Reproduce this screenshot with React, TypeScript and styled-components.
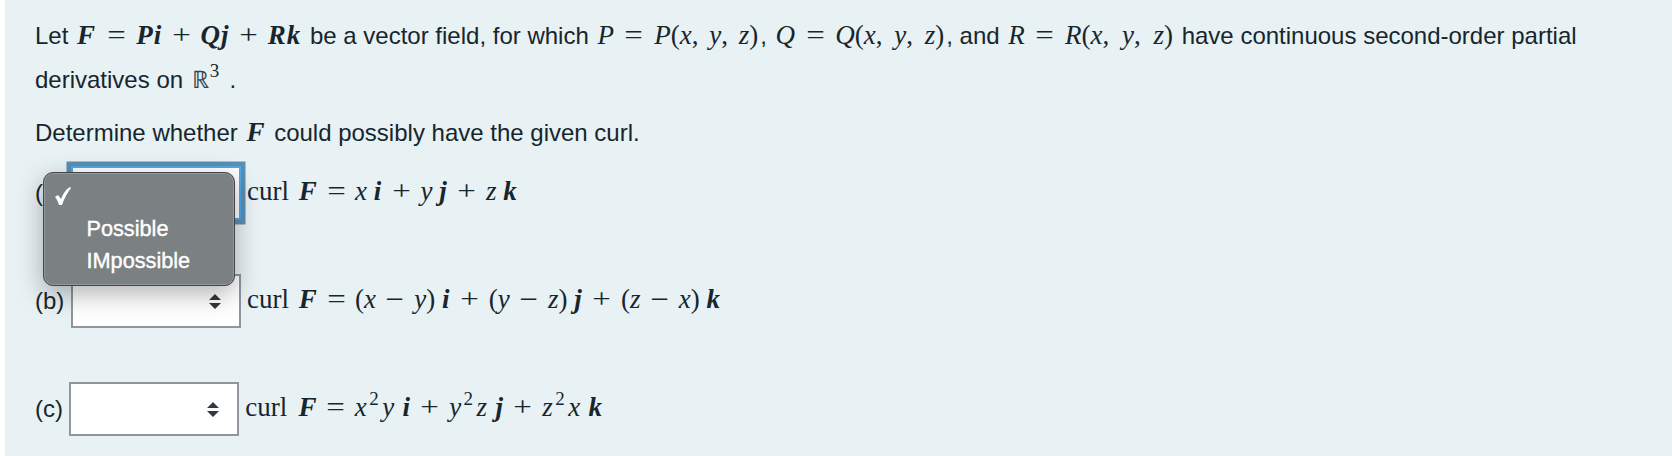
import React from "react";
import styled, { createGlobalStyle } from "styled-components";

const Global = createGlobalStyle`
  html, body { margin: 0; background: #fff; }
`;
const Panel = styled.main`
  margin-left: 5px;
  height: 456px;
  box-sizing: border-box;
  overflow: hidden;
  padding: 14px 0 0 30px;
  background: #e8f1f4;
  color: #17262c;
  font: 24px/44px "Liberation Sans", Arial, sans-serif;
`;
const Para = styled.p`
  margin: 0 0 9px;
`;
const Words = styled.span``;
const Math = styled.span`
  font: 27px/0 "Liberation Serif", "Times New Roman", serif;
  white-space: nowrap;
  padding: 0 2px;
`;
const N = styled.span``;
const V = styled.i`
  font-style: italic;
`;
const B = styled.b`
  font-style: italic;
  font-weight: 700;
  letter-spacing: 1px;
`;
const CurlF = styled(B)`
  margin-left: 3px;
`;
const Rel = styled.span<{ $m?: number }>`
  display: inline-block;
  line-height: 0;
  margin: 0 ${(p) => p.$m ?? 12.5}px;
  transform: scaleX(1.22);
`;
const Bin = styled.span`
  display: inline-block;
  line-height: 0;
  margin: 0 11.5px;
  transform: scaleX(1.22);
`;
const Thin = styled.span<{ $w: number }>`
  margin-right: ${(p) => p.$w}px;
`;
const Sup = styled.sup`
  font-size: 19px;
  line-height: 0;
  vertical-align: 11px;
  margin: 0 1.5px 0 1px;
`;
const Square = styled(Sup)`
  margin: 0 3.5px 0 2.5px;
`;
const Reals = styled.span`
  font: 24px/0 "DejaVu Sans", sans-serif;
  font-weight: 300;
  color: #33444a;
`;
const Rows = styled.div`
  margin-top: 11px;
  display: flex;
  flex-direction: column;
  gap: 54px;
`;
const Row = styled.div`
  position: relative;
  display: flex;
  align-items: center;
  height: 54px;
  line-height: 54px;
`;
const Label = styled.span<{ $gap?: number }>`
  margin-right: ${(p) => p.$gap ?? 6.67}px;
`;
const Select = styled.div<{ $focused?: boolean }>`
  box-sizing: border-box;
  width: 170px;
  height: 54px;
  margin-right: 6px;
  display: flex;
  align-items: center;
  justify-content: flex-end;
  padding-right: 18px;
  background: #fff;
  border: 2px solid ${(p) => (p.$focused ? "#4fa8ea" : "#8f969f")};
  box-shadow: ${(p) => (p.$focused ? "0 0 0 4.5px #5b8fb4" : "none")};
`;
const Arrows = styled.svg`
  width: 12px;
  height: 15px;
  fill: #30393e;
`;
const Equation = styled(Math)<{ $spread?: number }>`
  line-height: 48px;
  padding: 0 0 4px;
  word-spacing: ${(p) => p.$spread ?? 0}px;
`;
const Menu = styled.div`
  position: absolute;
  z-index: 2;
  left: 8px;
  top: 6px;
  box-sizing: border-box;
  width: 192px;
  height: 114px;
  padding-top: 8px;
  background: #7b8082;
  border: 1px solid #43474a;
  border-radius: 10px;
  box-shadow: inset 0 0 0 1px #93979a, 0 8px 26px rgba(0, 0, 0, 0.3);
  color: #fff;
  font: 21.7px/32px "Liberation Sans", Arial, sans-serif;
  -webkit-text-stroke: 0.4px #fff;
`;
const Item = styled.div`
  position: relative;
  height: 32px;
  padding-left: 42.5px;
`;
const Tick = styled.svg`
  position: absolute;
  left: 10px;
  top: 5px;
  width: 17px;
  height: 20px;
  fill: #fff;
`;

const Arrow = () => (
  <Arrows viewBox="0 0 12 15">
    <path d="M6 0 12 6H0zM0 9h12L6 15z" />
  </Arrows>
);

const Args = ({ thin }: { thin: number }) => (
  <>
    <N>(</N><V>x</V><N>,</N><Thin $w={thin} /> <V>y</V><N>,</N><Thin $w={thin} /> <V>z</V><N>)</N>
  </>
);

export default function App() {
  return (
    <>
      <Global />
      <Panel>
        <Para>
          <Words>Let</Words>{" "}
          <Math>
            <B>F</B><Rel>=</Rel><B>Pi</B><Bin>+</Bin><B>Qj</B><Bin>+</Bin><B>Rk</B>
          </Math>{" "}
          <Words>be a vector field, for which</Words>{" "}
          <Math>
            <V>P</V><Rel>=</Rel><V>P</V><Args thin={4} />
          </Math>
          <Words>,</Words>{" "}
          <Math>
            <V>Q</V><Rel>=</Rel><V>Q</V><Args thin={5} />
          </Math>
          <Words>, and</Words>{" "}
          <Math>
            <V>R</V><Rel>=</Rel><V>R</V><Args thin={6} />
          </Math>{" "}
          <Words>have continuous second-order partial</Words>{" "}
          <Words>derivatives on</Words>{" "}
          <Math>
            <Reals>ℝ</Reals><Sup>3</Sup>
          </Math>{" "}
          <Words>.</Words>
        </Para>
        <Para>
          <Words>Determine whether</Words> <Math><B>F</B></Math>{" "}
          <Words>could possibly have the given curl.</Words>
        </Para>
        <Rows>
          <Row>
            <Label>(a)</Label>
            <Select $focused><Arrow /></Select>
            <Equation>
              <N>curl</N> <CurlF>F</CurlF><Rel $m={11}>=</Rel><V>x</V> <B>i</B><Bin>+</Bin><V>y</V> <B>j</B><Bin>+</Bin><V>z</V> <B>k</B>
            </Equation>
            <Menu>
              <Item>
                <Tick viewBox="0 0 17 20">
                  <path d="M1 11 4 9 7 13C9 8 12 3 16 1L17 2C13 7 10 13 8 19H5C4 16 3 13 1 11Z" />
                </Tick>
              </Item>
              <Item>Possible</Item>
              <Item>IMpossible</Item>
            </Menu>
          </Row>
          <Row>
            <Label>(b)</Label>
            <Select><Arrow /></Select>
            <Equation>
              <N>curl</N> <CurlF>F</CurlF><Rel $m={11}>=</Rel><N>(</N><V>x</V><Bin>−</Bin><V>y</V><N>)</N> <B>i</B><Bin>+</Bin><N>(</N><V>y</V><Bin>−</Bin><V>z</V><N>)</N> <B>j</B><Bin>+</Bin><N>(</N><V>z</V><Bin>−</Bin><V>x</V><N>)</N> <B>k</B>
            </Equation>
          </Row>
          <Row>
            <Label $gap={6.2}>(c)</Label>
            <Select><Arrow /></Select>
            <Equation $spread={1.5}>
              <N>curl</N> <CurlF>F</CurlF><Rel $m={11}>=</Rel><V>x</V><Square>2</Square><V>y</V> <B>i</B><Bin>+</Bin><V>y</V><Square>2</Square><V>z</V> <B>j</B><Bin>+</Bin><V>z</V><Square>2</Square><V>x</V> <B>k</B>
            </Equation>
          </Row>
        </Rows>
      </Panel>
    </>
  );
}
